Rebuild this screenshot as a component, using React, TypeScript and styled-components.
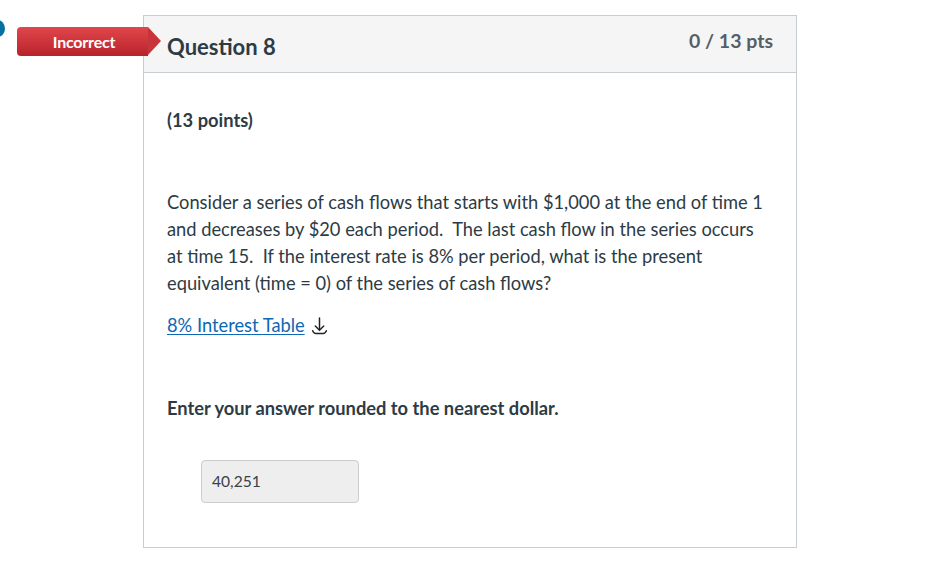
import React from 'react';
import styled, { createGlobalStyle } from 'styled-components';

const GlobalStyle = createGlobalStyle`
  html, body {
    margin: 0;
    padding: 0;
    background: #fff;
    font-family: Lato, "Liberation Sans", sans-serif;
    color: #2d3b45;
  }
`;

const Page = styled.div`
  position: relative;
  padding: 15px 0 0 143px;
  width: 929px;
  height: 568px;
  box-sizing: border-box;
  overflow: hidden;
`;

const EdgeDot = styled.div`
  position: absolute;
  left: -10px;
  top: 20px;
  width: 15px;
  height: 17px;
  border-radius: 50%;
  background: #0770a3;
`;

const Card = styled.div`
  position: relative;
  width: 654px;
  height: 533px;
  box-sizing: border-box;
  border: 1px solid #c7cdd1;
  background: #fff;
`;

const Badge = styled.div`
  position: absolute;
  left: -127px;
  top: 11px;
  width: 131px;
  height: 29px;
  box-sizing: border-box;
  padding-left: 3px;
  display: flex;
  align-items: center;
  justify-content: center;
  color: #fff;
  font-weight: 700;
  font-size: 16px;
  letter-spacing: -0.2px;
  border-radius: 4px 0 0 4px;
  background: linear-gradient(#e0474c, #b8232a);
  &::after {
    content: '';
    position: absolute;
    right: -13px;
    top: 0;
    border-top: 14.5px solid transparent;
    border-bottom: 14.5px solid transparent;
    border-left: 13px solid #c9343a;
  }
`;

const Header = styled.div`
  height: 57px;
  box-sizing: border-box;
  background: #f5f5f5;
  border-bottom: 1px solid #c7cdd1;
  display: flex;
  justify-content: space-between;
  padding: 0 23px 0 23px;
`;

const Title = styled.h2`
  margin: 17px 0 0;
  font-size: 22px;
  font-weight: 700;
  color: #2d3b45;
  line-height: 28px;
`;

const Points = styled.div`
  margin-top: 12px;
  font-size: 19.5px;
  font-weight: 700;
  color: #555f66;
  line-height: 26px;
`;

const Body = styled.div`
  padding: 34px 23px 0;
  font-size: 18.3px;
  line-height: 27px;
`;

const Para = styled.p<{ $bold?: boolean; $top?: number }>`
  margin: ${p => p.$top ?? 0}px 0 0;
  max-width: 601px;
  font-weight: ${p => (p.$bold ? 700 : 400)};
`;

const LinkRow = styled.div`
  margin-top: 15px;
  display: flex;
  align-items: center;
  gap: 6px;
`;

const Link = styled.a`
  color: #0e68b3;
  text-decoration: underline;
  text-underline-offset: 2px;
`;

const AnswerBox = styled.div`
  margin: 38px 0 0 34px;
  width: 158px;
  height: 43px;
  box-sizing: border-box;
  background: #eeeeee;
  border: 1px solid #cccccc;
  border-radius: 4px;
  padding: 0 10px;
  display: flex;
  align-items: center;
  font-size: 15.6px;
  color: #3a4148;
`;

const DownloadIcon = () => (
  <svg width="17" height="19" viewBox="0 0 16 18" fill="none" stroke="#222" strokeWidth="1.4" strokeLinecap="round">
    <path d="M8 2 V13" />
    <path d="M4 9.5 L8 13.5 L12 9.5" />
    <path d="M1.5 14 Q2.5 16.5 4.5 16.5 H11.5 Q13.5 16.5 14.5 14" />
  </svg>
);

const App = () => (
  <>
    <GlobalStyle />
    <Page>
      <EdgeDot />
      <Card>
        <Badge>Incorrect</Badge>
        <Header>
          <Title>Question 8</Title>
          <Points>0 / 13 pts</Points>
        </Header>
        <Body>
          <Para $bold>(13 points)</Para>
          <Para $top={55}>
            Consider a series of cash flows that starts with $1,000 at the end of time 1 and decreases by $20 each
            period.&nbsp; The last cash flow in the series occurs at time 15.&nbsp; If the interest rate is 8% per
            period, what is the present equivalent (time = 0) of the series of cash flows?
          </Para>
          <LinkRow>
            <Link href="#">8% Interest Table</Link>
            <DownloadIcon />
          </LinkRow>
          <Para $bold $top={56}>Enter your answer rounded to the nearest dollar.</Para>
          <AnswerBox>40,251</AnswerBox>
        </Body>
      </Card>
    </Page>
  </>
);

export default App;
